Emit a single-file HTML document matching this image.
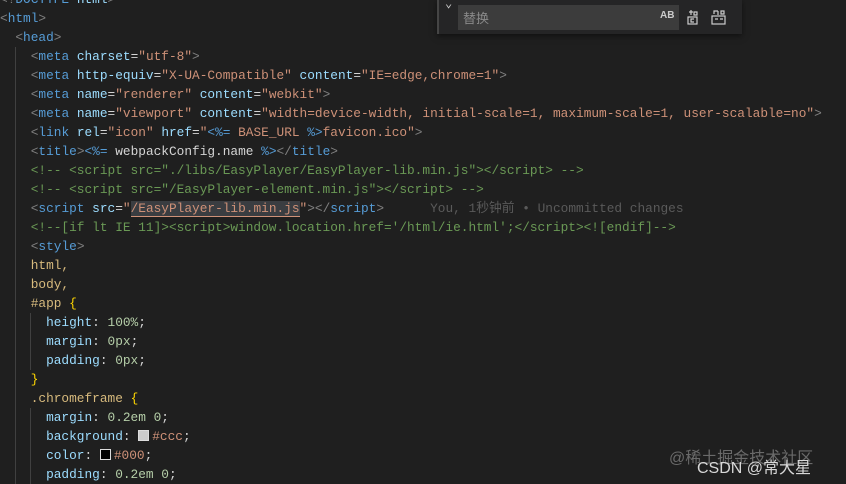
<!DOCTYPE html>
<html><head><meta charset="utf-8"><style>
body{margin:0;width:846px;height:484px;background:#1f1f1f;overflow:hidden;position:relative;font-family:"Liberation Mono","Noto Sans CJK SC",monospace;font-size:12.8px;color:#d4d4d4}
.l{position:absolute;left:0;height:19px;line-height:19px;white-space:pre}
.p{color:#808080}.t{color:#569cd6}.a{color:#9cdcfe}.s{color:#ce9178}.c{color:#6a9955}.y{color:#d7ba7d}.b{color:#ffd700}.n{color:#b5cea8}.w{color:#d4d4d4}.k{color:#c586c0}
.g{position:absolute;width:1px;background:#404040}
.sw{display:inline-block;width:9px;height:9px;border:1px solid #ddd;vertical-align:-1px;margin-right:3px}
</style></head><body>
<div class="g" style="left:15px;top:47px;height:437px"></div>
<div class="g" style="left:30px;top:313px;height:57px"></div>
<div class="g" style="left:30px;top:408px;height:76px"></div>
<div class="l" style="top:-10px"><span class="p">&lt;!</span><span class="t">DOCTYPE</span> <span class="a">html</span><span class="p">&gt;</span></div>
<div class="l" style="top:9px"><span class="p">&lt;</span><span class="t">html</span><span class="p">&gt;</span></div>
<div class="l" style="top:28px">  <span class="p">&lt;</span><span class="t">head</span><span class="p">&gt;</span></div>
<div class="l" style="top:47px">    <span class="p">&lt;</span><span class="t">meta</span> <span class="a">charset</span>=<span class="s">"utf-8"</span><span class="p">&gt;</span></div>
<div class="l" style="top:66px">    <span class="p">&lt;</span><span class="t">meta</span> <span class="a">http-equiv</span>=<span class="s">"X-UA-Compatible"</span> <span class="a">content</span>=<span class="s">"IE=edge,chrome=1"</span><span class="p">&gt;</span></div>
<div class="l" style="top:85px">    <span class="p">&lt;</span><span class="t">meta</span> <span class="a">name</span>=<span class="s">"renderer"</span> <span class="a">content</span>=<span class="s">"webkit"</span><span class="p">&gt;</span></div>
<div class="l" style="top:104px">    <span class="p">&lt;</span><span class="t">meta</span> <span class="a">name</span>=<span class="s">"viewport"</span> <span class="a">content</span>=<span class="s">"width=device-width, initial-scale=1, maximum-scale=1, user-scalable=no"</span><span class="p">&gt;</span></div>
<div class="l" style="top:123px">    <span class="p">&lt;</span><span class="t">link</span> <span class="a">rel</span>=<span class="s">"icon"</span> <span class="a">href</span>=<span class="s">"</span><span class="t">&lt;%=</span><span class="s"> BASE_URL </span><span class="t">%&gt;</span><span class="s">favicon.ico"</span><span class="p">&gt;</span></div>
<div class="l" style="top:142px">    <span class="p">&lt;</span><span class="t">title</span><span class="p">&gt;</span><span class="t">&lt;%=</span> webpackConfig.name <span class="t">%&gt;</span><span class="p">&lt;/</span><span class="t">title</span><span class="p">&gt;</span></div>
<div class="l c" style="top:161px">    &lt;!-- &lt;script src="./libs/EasyPlayer/EasyPlayer-lib.min.js"&gt;&lt;/script&gt; --&gt;</div>
<div class="l c" style="top:180px">    &lt;!-- &lt;script src="/EasyPlayer-element.min.js"&gt;&lt;/script&gt; --&gt;</div>
<div class="l" style="top:199px">    <span class="p">&lt;</span><span class="t">script</span> <span class="a">src</span>=<span class="s">"<span style="background:#3a3d41;border-bottom:1px solid #ce9178">/EasyPlayer-lib.min.js</span>"</span><span class="p">&gt;&lt;/</span><span class="t">script</span><span class="p">&gt;</span>      <span style="color:#5a5a5a">You, 1秒钟前 • Uncommitted changes</span></div>
<div class="l c" style="top:218px">    &lt;!--[if lt IE 11]&gt;&lt;script&gt;window.location.href='/html/ie.html';&lt;/script&gt;&lt;![endif]--&gt;</div>
<div class="l" style="top:237px">    <span class="p">&lt;</span><span class="t">style</span><span class="p">&gt;</span></div>
<div class="l y" style="top:256px">    html,</div>
<div class="l y" style="top:275px">    body,</div>
<div class="l" style="top:294px">    <span class="y">#app</span> <span class="b">{</span></div>
<div class="l" style="top:313px">      <span class="a">height</span>: <span class="n">100%</span>;</div>
<div class="l" style="top:332px">      <span class="a">margin</span>: <span class="n">0px</span>;</div>
<div class="l" style="top:351px">      <span class="a">padding</span>: <span class="n">0px</span>;</div>
<div class="l" style="top:370px">    <span class="b">}</span></div>
<div class="l" style="top:389px">    <span class="y">.chromeframe</span> <span class="b">{</span></div>
<div class="l" style="top:408px">      <span class="a">margin</span>: <span class="n">0.2em 0</span>;</div>
<div class="l" style="top:427px">      <span class="a">background</span>: <span class="sw" style="background:#ccc"></span><span class="s">#ccc</span>;</div>
<div class="l" style="top:446px">      <span class="a">color</span>: <span class="sw" style="background:#000"></span><span class="s">#000</span>;</div>
<div class="l" style="top:465px">      <span class="a">padding</span>: <span class="n">0.2em 0</span>;</div>

<div style="position:absolute;left:437px;top:0;width:303px;height:34px;background:#252526;border-left:2px solid #454545;box-shadow:0 2px 6px rgba(0,0,0,.5)"></div>
<div style="position:absolute;left:445px;top:-4px;color:#ccc;font-size:12px">&#8964;</div>
<div style="position:absolute;left:458px;top:5px;width:221px;height:25px;background:#3c3c3c"></div>
<div style="position:absolute;left:463px;top:8px;color:#8a8a8a;font-family:'Noto Sans CJK SC',sans-serif;font-size:13px;line-height:19px">替换</div>
<div style="position:absolute;left:660px;top:10px;color:#ccc;font-family:'Liberation Sans',sans-serif;font-size:10px;font-weight:bold">AB</div>
<svg style="position:absolute;left:686px;top:9px" width="14" height="16" viewBox="0 0 14 16" fill="none" stroke="#ccc" stroke-width="1.2"><path d="M3 3h4M5 1v5M8 3h3v3H8z"/><rect x="2" y="8" width="9" height="7"/><path d="M8 10H5v3h3"/></svg>
<svg style="position:absolute;left:711px;top:9px" width="16" height="16" viewBox="0 0 16 16" fill="none" stroke="#ccc" stroke-width="1.2"><path d="M3 5V2h4M10 2h3v3h-3zM7 2v4"/><rect x="1" y="7" width="13" height="8"/><path d="M4 10h3M9 10h3"/></svg>

<div style="position:absolute;left:669px;top:444px;color:#6a6a6a;font-family:'Liberation Sans','Noto Sans CJK SC',sans-serif;font-size:16px">@稀土掘金技术社区</div>
<div style="position:absolute;left:697px;top:454px;color:#d8d8d8;font-family:'Liberation Sans','Noto Sans CJK SC',sans-serif;font-size:16px">CSDN @常大星</div>
</body></html>
